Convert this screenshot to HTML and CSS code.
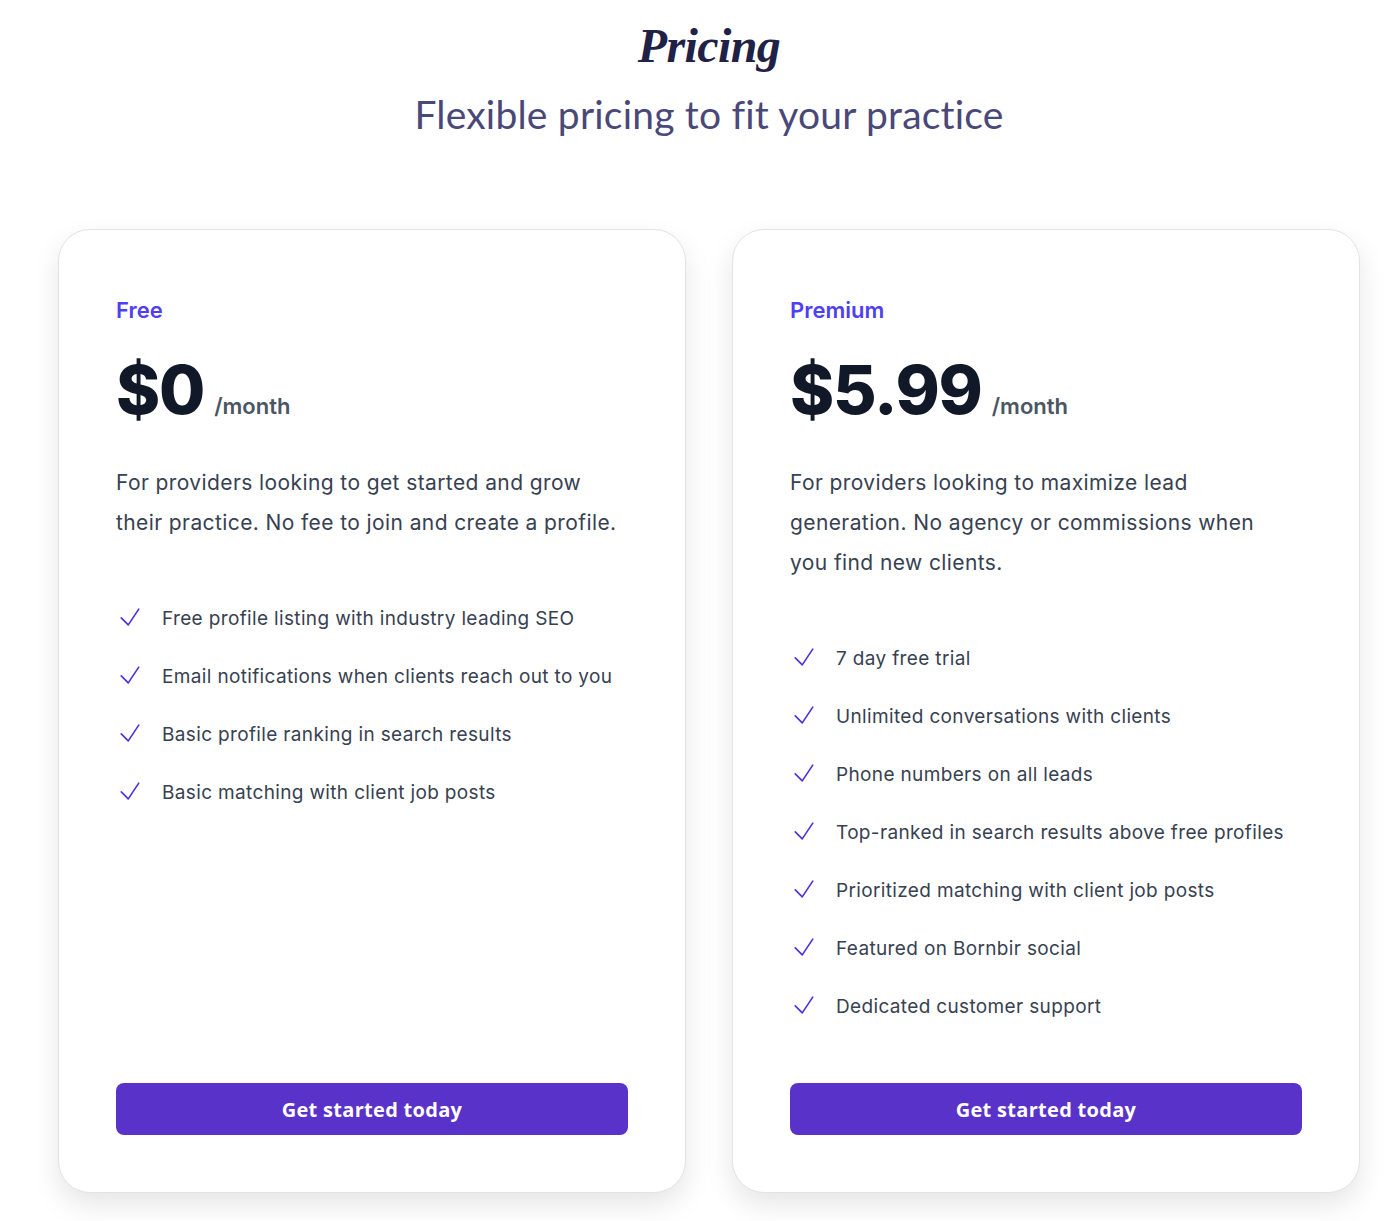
FILE: index.html
```html
<!DOCTYPE html>
<html lang="en">
<head>
    <meta charset="UTF-8">
    <meta name="viewport" content="width=device-width, initial-scale=1.0">
    <title>Pricing</title>
    <link rel="stylesheet" href="styles.css">
</head>
<body>
    <header class="intro">
        <h1>Pricing</h1>
        <p class="tagline">Flexible pricing to fit your practice</p>
    </header>

    <div class="plans">
        <div class="plan">
            <h2 class="plan-name">Free</h2>
            <p class="price"><span class="amount">$0</span> <span class="period">/month</span></p>
            <p class="blurb">For providers looking to get started and grow their practice. No fee to join and create a profile.</p>
            <ul class="features">
                <li><svg class="check" viewBox="0 0 24 24"><path d="M4.5 12.75l6 6 9-13.5"/></svg>Free profile listing with industry leading SEO</li>
                <li><svg class="check" viewBox="0 0 24 24"><path d="M4.5 12.75l6 6 9-13.5"/></svg>Email notifications when clients reach out to you</li>
                <li><svg class="check" viewBox="0 0 24 24"><path d="M4.5 12.75l6 6 9-13.5"/></svg>Basic profile ranking in search results</li>
                <li><svg class="check" viewBox="0 0 24 24"><path d="M4.5 12.75l6 6 9-13.5"/></svg>Basic matching with client job posts</li>
            </ul>
            <button class="cta">Get started today</button>
        </div>

        <div class="plan">
            <h2 class="plan-name">Premium</h2>
            <p class="price"><span class="amount">$5.99</span> <span class="period">/month</span></p>
            <p class="blurb">For providers looking to maximize lead generation. No agency or commissions when<br>you find new clients.</p>
            <ul class="features">
                <li><svg class="check" viewBox="0 0 24 24"><path d="M4.5 12.75l6 6 9-13.5"/></svg>7 day free trial</li>
                <li><svg class="check" viewBox="0 0 24 24"><path d="M4.5 12.75l6 6 9-13.5"/></svg>Unlimited conversations with clients</li>
                <li><svg class="check" viewBox="0 0 24 24"><path d="M4.5 12.75l6 6 9-13.5"/></svg>Phone numbers on all leads</li>
                <li><svg class="check" viewBox="0 0 24 24"><path d="M4.5 12.75l6 6 9-13.5"/></svg>Top-ranked in search results above free profiles</li>
                <li><svg class="check" viewBox="0 0 24 24"><path d="M4.5 12.75l6 6 9-13.5"/></svg>Prioritized matching with client job posts</li>
                <li><svg class="check" viewBox="0 0 24 24"><path d="M4.5 12.75l6 6 9-13.5"/></svg>Featured on Bornbir social</li>
                <li><svg class="check" viewBox="0 0 24 24"><path d="M4.5 12.75l6 6 9-13.5"/></svg>Dedicated customer support</li>
            </ul>
            <button class="cta">Get started today</button>
        </div>
    </div>
</body>
</html>
```

FILE: styles.css
```css
body {
    margin: 0;
    background: #fff;
    font-family: 'Inter', 'Liberation Sans', sans-serif;
    color: #374151;
}
.intro {
    text-align: center;
    padding-top: 13px;
    padding-left: 18px;
}
.intro h1 {
    margin: 0;
    font-family: 'Liberation Serif', serif;
    font-style: italic;
    font-weight: bold;
    font-size: 48px;
    line-height: 66px;
    letter-spacing: -0.6px;
    color: #1f2147;
}
.tagline {
    margin: 11px 0 0;
    font-family: 'Lato', sans-serif;
    font-size: 39px;
    line-height: 48px;
    letter-spacing: 0.2px;
    color: #4a4879;
}
.plans {
    display: flex;
    gap: 46px;
    padding: 91px 40px 28px 58px;
}
.plan {
    flex: 1;
    display: flex;
    flex-direction: column;
    height: 964px;
    box-sizing: border-box;
    padding: 65px 57px 57px;
    border: 1px solid #e3e3e6;
    border-radius: 32px;
    background: #fff;
    box-shadow: 0 12px 28px rgba(0, 0, 0, 0.10);
}
.plan-name {
    margin: 0;
    font-size: 22px;
    line-height: 30px;
    font-weight: 600;
    color: #4f3ff0;
}
.price {
    margin: 25px 0 0;
    display: flex;
    align-items: baseline;
    gap: 10px;
}
.amount {
    font-size: 67px;
    line-height: 80px;
    font-weight: 800;
    color: #111827;
    letter-spacing: -1.2px;
}
.period {
    font-size: 22px;
    font-weight: 600;
    color: #4b5563;
}
.blurb {
    margin: 33px 0 0;
    font-size: 21px;
    line-height: 40px;
    letter-spacing: 0.4px;
    color: #374151;
}
.features {
    list-style: none;
    margin: 61px 0 0;
    padding: 0;
}
.features li {
    display: flex;
    align-items: center;
    gap: 18px;
    font-size: 19px;
    line-height: 30px;
    letter-spacing: 0.35px;
    margin-bottom: 28px;
    color: #374151;
}
.check {
    width: 28px;
    height: 28px;
    margin-top: -4px;
    flex-shrink: 0;
    fill: none;
    stroke: #4f2fe0;
    stroke-width: 1.4;
    stroke-linecap: round;
    stroke-linejoin: round;
}
.cta {
    margin-top: auto;
    height: 52px;
    border: none;
    border-radius: 8px;
    background: #5932c9;
    color: #fff;
    font-family: 'Open Sans', sans-serif;
    font-size: 20px;
    font-weight: 700;
    letter-spacing: 0.3px;
    cursor: pointer;
}
```
